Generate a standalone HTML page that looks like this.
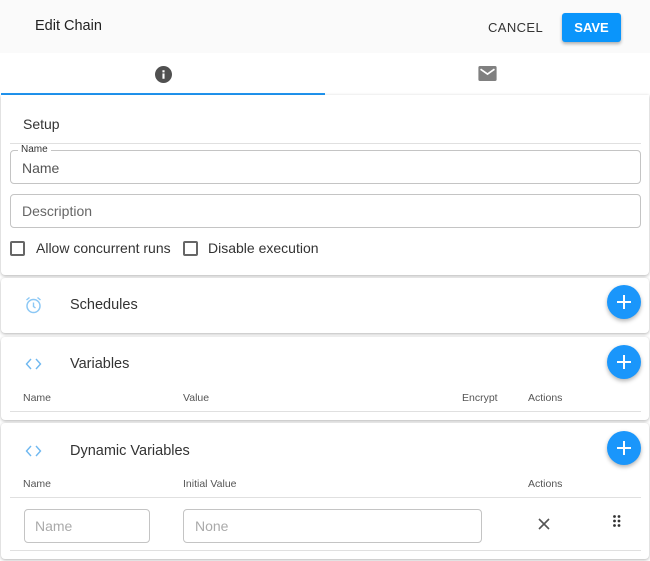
<!DOCTYPE html>
<html><head><style>
*{box-sizing:border-box;margin:0;padding:0}
body{width:650px;height:561px;background:#fff;font-family:"Liberation Sans",sans-serif;color:#333;position:relative;overflow:hidden}
.a{position:absolute}
.card{position:absolute;left:1px;width:648px;background:#fff;border-radius:4px;box-shadow:0 1px 3px rgba(0,0,0,.3)}
.fab{position:absolute;left:607px;width:34px;height:34px;border-radius:50%;background:#1a96fb;box-shadow:0 2px 4px rgba(0,0,0,.3)}
.fab svg{position:absolute;left:10px;top:10px}
.field{position:absolute;border:1px solid #c4c4c4;border-radius:4px}
.th{position:absolute;font-size:10.5px;color:#555}
.line{position:absolute;height:1px;background:#e0e0e0}
.cb{position:absolute;width:15px;height:15px;border:2px solid #666;border-radius:2px}
</style></head><body>
<div class="a" style="left:0;top:0;width:650px;height:53px;background:#fafafa"></div>
<div class="a" style="left:35px;top:18px;font-size:14.5px;color:#222">Edit Chain</div>
<div class="a" style="left:488px;top:20px;font-size:13px;color:#333;letter-spacing:.4px">CANCEL</div>
<div class="a" style="left:562px;top:13px;width:59px;height:29px;background:#0a95fb;border-radius:3px;box-shadow:0 2px 3px rgba(0,0,0,.3);color:#fff;font-size:13px;font-weight:bold;text-align:center;line-height:29px">SAVE</div>
<svg class="a" style="left:155px;top:66px" width="17" height="17" viewBox="0 0 16 16"><circle cx="8" cy="8" r="8" fill="#505050"/><rect x="7" y="7" width="2" height="5" fill="#fff"/><rect x="7" y="4" width="2" height="2" fill="#fff"/></svg>
<svg class="a" style="left:478px;top:66px" width="19" height="15" viewBox="0 0 17 14"><rect width="17" height="14" rx="1.5" fill="#808080"/><path d="M2 3 L8.5 7.5 L15 3" stroke="#fff" stroke-width="1.6" fill="none"/></svg>
<div class="a" style="left:1px;top:93px;width:324px;height:2px;background:#2196f3"></div>
<div class="card" style="top:95px;height:180px;border-top-left-radius:0;border-top-right-radius:0"></div>
<div class="a" style="left:23px;top:116px;font-size:14px">Setup</div>
<div class="line" style="left:10px;top:143px;width:631px"></div>
<div class="field" style="left:10px;top:150px;width:631px;height:34px"></div>
<div class="a" style="left:18px;top:144px;background:#fff;padding:0 3px;font-size:10px;color:#333">Name</div>
<div class="a" style="left:22px;top:160px;font-size:14px;color:#555">Name</div>
<div class="field" style="left:10px;top:194px;width:631px;height:34px"></div>
<div class="a" style="left:22px;top:203px;font-size:14px;color:#666">Description</div>
<div class="cb" style="left:10px;top:241px"></div>
<div class="a" style="left:36px;top:240px;font-size:14px;color:#333">Allow concurrent runs</div>
<div class="cb" style="left:183px;top:241px"></div>
<div class="a" style="left:208px;top:240px;font-size:14px;color:#333">Disable execution</div>

<div class="card" style="top:278px;height:55px"></div>
<svg class="a" style="left:25px;top:296px" width="17" height="18" viewBox="0 0 17 18"><circle cx="8.5" cy="10" r="6.5" stroke="#8cc8f5" stroke-width="1.5" fill="none"/><path d="M8.5 6.5V10.5L10.5 12M1.5 4L4.5 1.5M15.5 4L12.5 1.5" stroke="#8cc8f5" stroke-width="1.4" fill="none"/></svg>
<div class="a" style="left:70px;top:297px;font-size:14.5px;color:#333">Schedules</div>
<div class="fab" style="top:285px"><svg width="14" height="14"><path d="M7 0V14M0 7H14" stroke="#fff" stroke-width="2"/></svg></div>

<div class="card" style="top:337px;height:83px"></div>
<svg class="a" style="left:25px;top:358px" width="17" height="12" viewBox="0 0 17 12"><path d="M6 1L1.5 6L6 11M11 1L15.5 6L11 11" stroke="#6fb8f0" stroke-width="1.4" fill="none"/></svg>
<div class="a" style="left:70px;top:356px;font-size:14.5px;color:#333">Variables</div>
<div class="fab" style="top:345px"><svg width="14" height="14"><path d="M7 0V14M0 7H14" stroke="#fff" stroke-width="2"/></svg></div>
<div class="th" style="left:23px;top:392px">Name</div>
<div class="th" style="left:183px;top:392px">Value</div>
<div class="th" style="left:462px;top:392px">Encrypt</div>
<div class="th" style="left:528px;top:392px">Actions</div>
<div class="line" style="left:10px;top:411px;width:631px"></div>

<div class="card" style="top:423px;height:136px"></div>
<svg class="a" style="left:25px;top:445px" width="17" height="12" viewBox="0 0 17 12"><path d="M6 1L1.5 6L6 11M11 1L15.5 6L11 11" stroke="#6fb8f0" stroke-width="1.4" fill="none"/></svg>
<div class="a" style="left:70px;top:443px;font-size:14.5px;color:#333">Dynamic Variables</div>
<div class="fab" style="top:431px"><svg width="14" height="14"><path d="M7 0V14M0 7H14" stroke="#fff" stroke-width="2"/></svg></div>
<div class="th" style="left:23px;top:478px">Name</div>
<div class="th" style="left:183px;top:478px">Initial Value</div>
<div class="th" style="left:528px;top:478px">Actions</div>
<div class="line" style="left:10px;top:497px;width:631px"></div>
<div class="field" style="left:24px;top:509px;width:126px;height:34px"></div>
<div class="a" style="left:35px;top:518px;font-size:14px;color:#aaa">Name</div>
<div class="field" style="left:183px;top:509px;width:299px;height:34px"></div>
<div class="a" style="left:195px;top:518px;font-size:14px;color:#aaa">None</div>
<svg class="a" style="left:538px;top:518px" width="12" height="12" viewBox="0 0 12 12"><path d="M1 1L11 11M11 1L1 11" stroke="#555" stroke-width="1.6"/></svg>
<svg class="a" style="left:613px;top:515px" width="8" height="12" viewBox="0 0 8 12"><g fill="#333"><circle cx="1.5" cy="1.5" r="1.4"/><circle cx="6" cy="1.5" r="1.4"/><circle cx="1.5" cy="6" r="1.4"/><circle cx="6" cy="6" r="1.4"/><circle cx="1.5" cy="10.5" r="1.4"/><circle cx="6" cy="10.5" r="1.4"/></g></svg>
<div class="line" style="left:10px;top:550px;width:631px"></div>
</body></html>
